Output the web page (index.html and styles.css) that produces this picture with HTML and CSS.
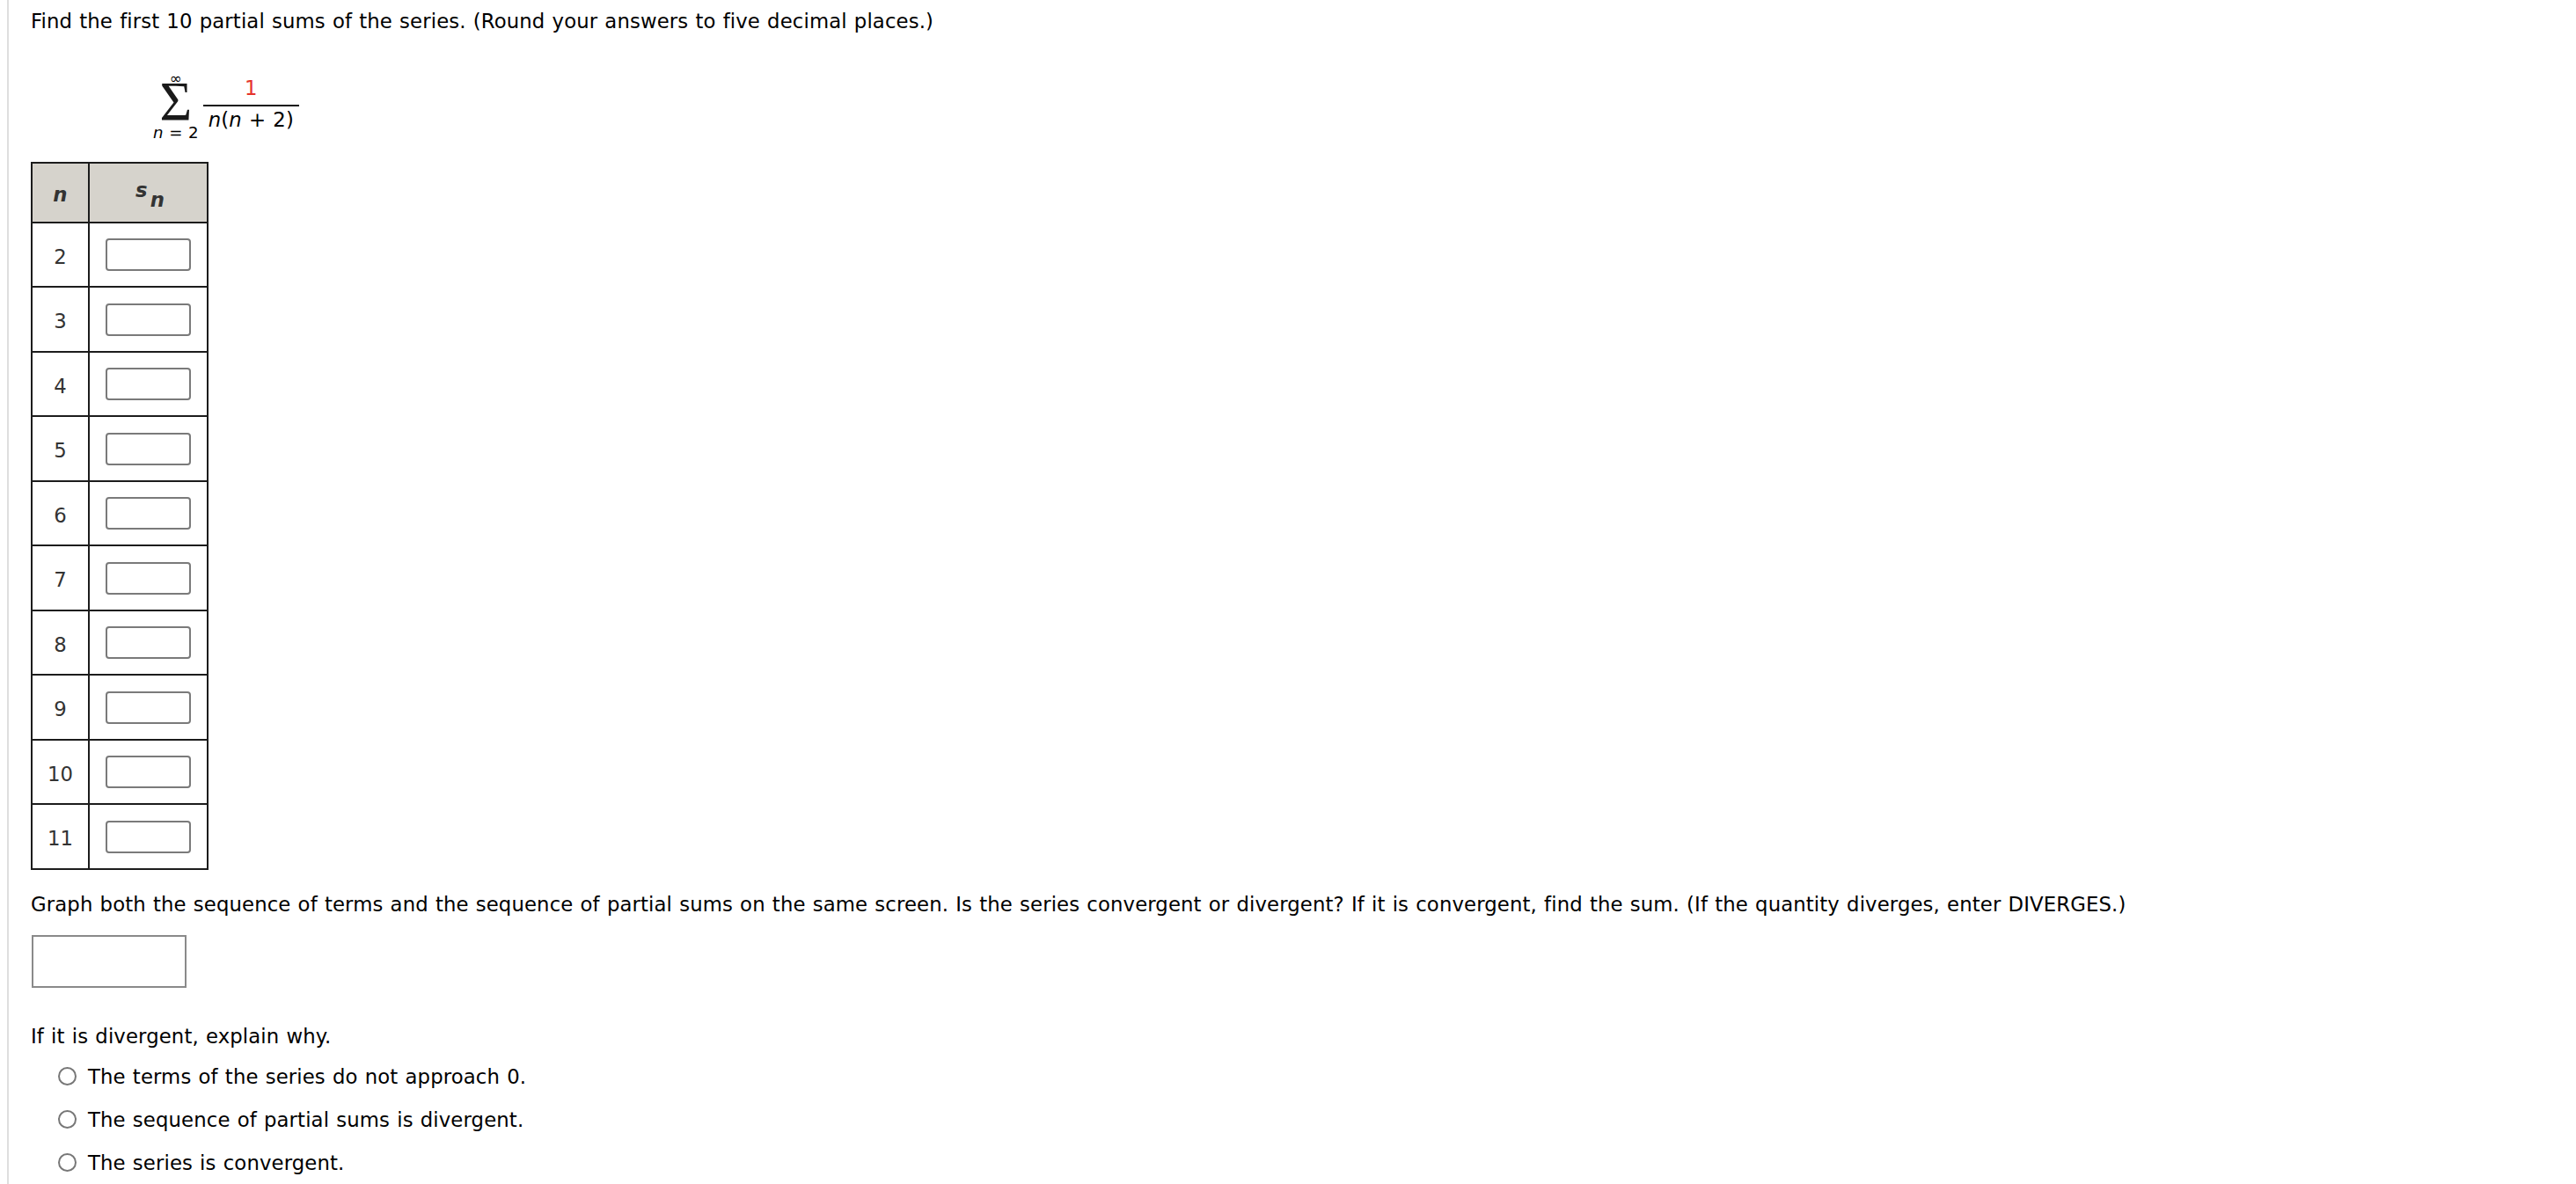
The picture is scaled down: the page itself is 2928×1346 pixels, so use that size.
FILE: index.html
```html
<!DOCTYPE html>
<html lang="en">
<head>
<meta charset="utf-8">
<title>Partial sums</title>
<link rel="stylesheet" href="styles.css">
</head>
<body>
<div class="page">
  <p class="line first">Find the first 10 partial sums of the series. (Round your answers to five decimal places.)</p>

  <div class="formula">
    <div class="sigma">
      <span class="inf">∞</span>
      <span class="sym">Σ</span>
      <span class="sub"><i>n</i> = 2</span>
    </div>
    <div class="frac">
      <span class="num">1</span>
      <span class="bar"></span>
      <span class="den"><i>n</i>(<i>n</i> + 2)</span>
    </div>
  </div>

  <table class="sums">
    <thead>
      <tr>
        <th><div class="c1 hd hd1"><span><i>n</i></span></div></th>
        <th><div class="c2 hd hd2"><span class="sn"><i>s</i><sub><i>n</i></sub></span></div></th>
      </tr>
    </thead>
    <tbody>
      <tr><td><div class="c1">2</div></td><td><div class="c2"><input class="cell-in" type="text"></div></td></tr>
      <tr><td><div class="c1">3</div></td><td><div class="c2"><input class="cell-in" type="text"></div></td></tr>
      <tr><td><div class="c1">4</div></td><td><div class="c2"><input class="cell-in" type="text"></div></td></tr>
      <tr><td><div class="c1">5</div></td><td><div class="c2"><input class="cell-in" type="text"></div></td></tr>
      <tr><td><div class="c1">6</div></td><td><div class="c2"><input class="cell-in" type="text"></div></td></tr>
      <tr><td><div class="c1">7</div></td><td><div class="c2"><input class="cell-in" type="text"></div></td></tr>
      <tr><td><div class="c1">8</div></td><td><div class="c2"><input class="cell-in" type="text"></div></td></tr>
      <tr><td><div class="c1">9</div></td><td><div class="c2"><input class="cell-in" type="text"></div></td></tr>
      <tr><td><div class="c1">10</div></td><td><div class="c2"><input class="cell-in" type="text"></div></td></tr>
      <tr><td><div class="c1">11</div></td><td><div class="c2"><input class="cell-in" type="text"></div></td></tr>
    </tbody>
  </table>

  <p class="line graph">Graph both the sequence of terms and the sequence of partial sums on the same screen. Is the series convergent or divergent? If it is convergent, find the sum. (If the quantity diverges, enter DIVERGES.)</p>

  <input class="sum-in" type="text">

  <p class="line why">If it is divergent, explain why.</p>

  <div class="opts">
    <label class="opt"><input type="radio" name="why" class="radio"><span>The terms of the series do not approach 0.</span></label>
    <label class="opt"><input type="radio" name="why" class="radio"><span>The sequence of partial sums is divergent.</span></label>
    <label class="opt"><input type="radio" name="why" class="radio"><span>The series is convergent.</span></label>
  </div>
</div>
</body>
</html>
```

FILE: styles.css
```css
html, body {
  margin: 0;
  padding: 0;
  background: #fff;
}

body {
  font-family: "DejaVu Sans", Verdana, sans-serif;
  font-size: 22.75px;
  letter-spacing: 0.13px;
  color: #000;
}

.page {
  margin-left: 8px;
  border-left: 2px solid #dedede;
  padding: 10.5px 0 0 25px;
  min-height: 1336px;
  box-sizing: border-box;
}

.line {
  margin: 0;
  line-height: 27.3px;
  word-spacing: 0.034em;
  white-space: nowrap;
}

/* formula */
.formula {
  display: flex;
  align-items: flex-start;
  margin: 46px 0 0 139px;
}

.sigma {
  display: flex;
  flex-direction: column;
  align-items: center;
}

.inf {
  font-size: 17px;
  line-height: 10px;
}

.sym {
  font-family: "Liberation Serif", "DejaVu Serif", serif;
  font-size: 63px;
  line-height: 44px;
  color: #1a1a1a;
}

.sub {
  font-size: 18.2px;
  line-height: 25px;
  word-spacing: 0.034em;
}

.frac {
  display: flex;
  flex-direction: column;
  align-items: center;
  margin-left: 5px;
  margin-top: 4.5px;
}

.num {
  color: #e5332b;
  line-height: 24px;
}

.bar {
  display: block;
  width: 109px;
  height: 2px;
  background: #111;
  margin-top: 7px;
}

.den {
  line-height: 24px;
  margin-top: 3px;
  padding: 0 5px;
  word-spacing: 0.034em;
}

/* table */
.sums {
  border-collapse: separate;
  border-spacing: 0;
  border-top: 2px solid #1c1c1c;
  border-left: 2px solid #1c1c1c;
  margin-top: 21px;
}

.sums th,
.sums td {
  padding: 0;
  border-right: 2px solid #1c1c1c;
  border-bottom: 2px solid #1c1c1c;
}

.sums th {
  background: #d6d3cc;
}

.c1,
.c2 {
  display: flex;
  align-items: center;
  justify-content: center;
  box-sizing: border-box;
  height: 71.5px;
  color: #333;
  font-weight: normal;
}

.c1 {
  width: 63px;
  padding-top: 4px;
}

.c2 { width: 133px; }

.hd {
  height: 66px;
  align-items: flex-start;
  font-weight: bold;
  line-height: 27.3px;
}

.hd1 {
  padding-top: 22.5px;
}

.hd2 {
  padding-top: 17px;
  padding-left: 4px;
}

.sn sub {
  font-size: 22.75px;
  vertical-align: -0.5em;
  line-height: 0;
  margin-left: 3px;
}

.cell-in {
  box-sizing: border-box;
  width: 97px;
  height: 37px;
  margin: 0;
  border: 2px solid #7a7a7a;
  border-radius: 4px;
  background: #fff;
  padding: 0;
}

.graph {
  margin-top: 26.5px;
}

.sum-in {
  display: block;
  box-sizing: border-box;
  width: 176px;
  height: 60px;
  margin: 20px 0 0 1px;
  border: 2px solid #8a8a8a;
  border-radius: 0;
  padding: 0;
  background: #fff;
}

.why {
  margin-top: 42px;
}

.opts {
  margin-top: 8.5px;
  padding-left: 31px;
}

.opt {
  display: flex;
  align-items: center;
  height: 49px;
  line-height: 27.3px;
  word-spacing: 0.034em;
}

.radio {
  appearance: none;
  -webkit-appearance: none;
  box-sizing: border-box;
  width: 21px;
  height: 21px;
  margin: 0 13px 0 0;
  border: 2px solid #777;
  border-radius: 50%;
  background: #fff;
  position: relative;
  top: -1px;
}
```
